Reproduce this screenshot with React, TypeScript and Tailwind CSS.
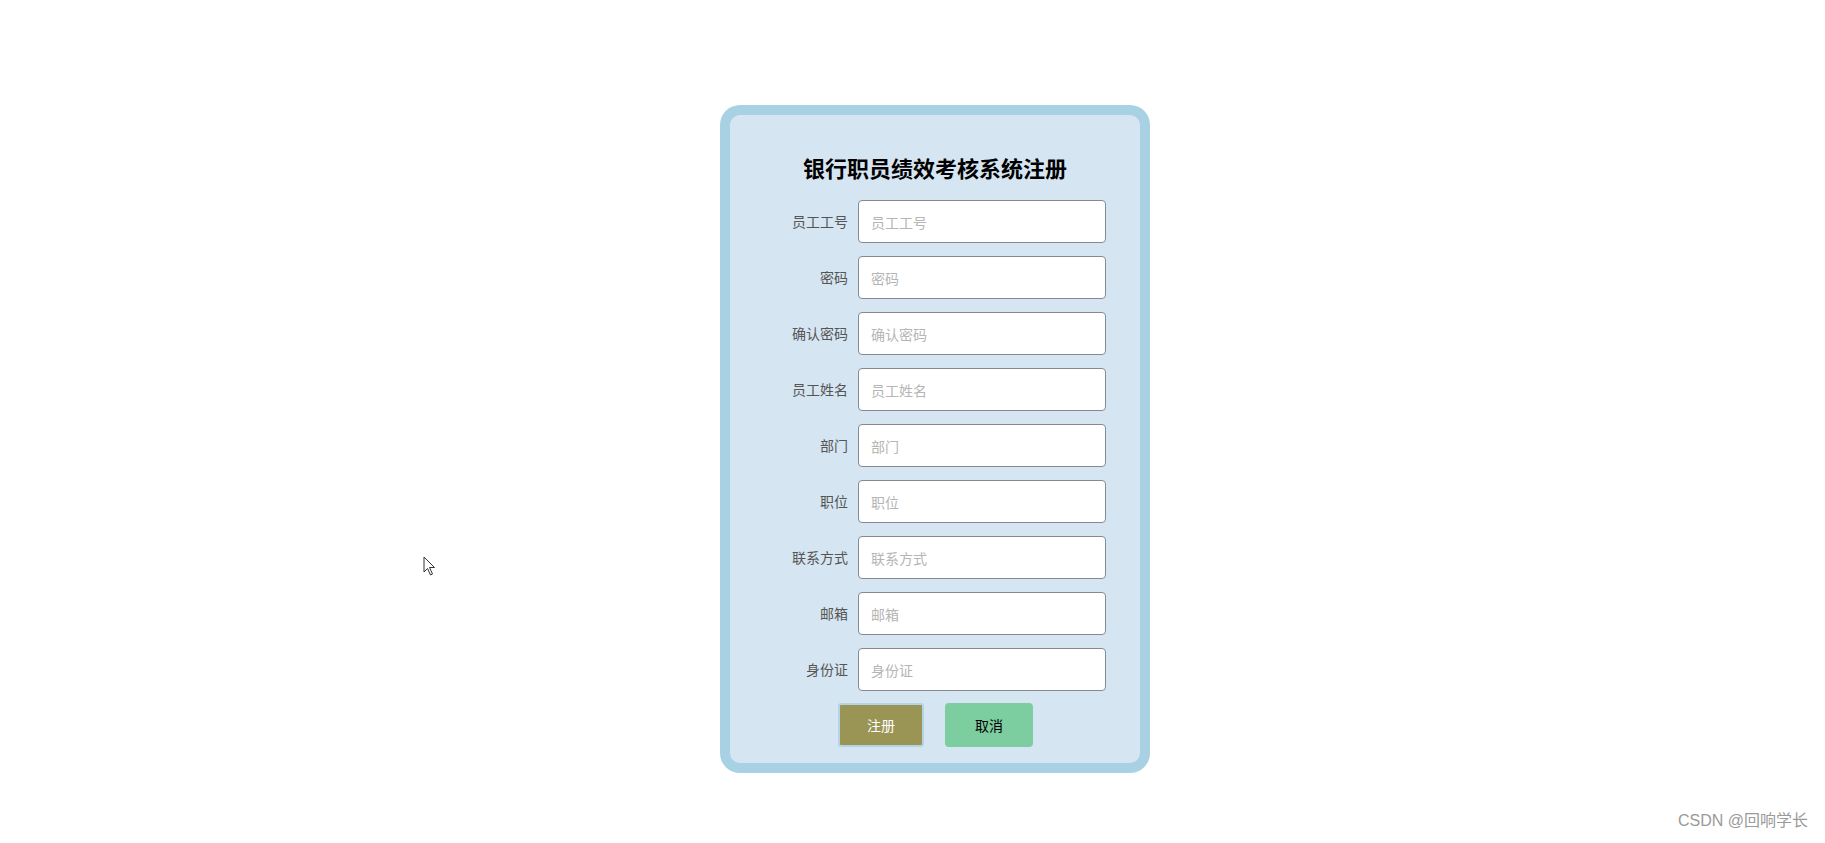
const fields = [
  "员工工号",
  "密码",
  "确认密码",
  "员工姓名",
  "部门",
  "职位",
  "联系方式",
  "邮箱",
  "身份证"
];

function Cursor() {
  return (
    <svg width="14" height="22" viewBox="0 0 14 22" className="absolute left-[423px] top-[556px]">
      <path
        d="M1 1 L1 16 L4.5 12.5 L7.5 19 L9.5 18 L6.5 11.5 L11.5 11.5 Z"
        fill="#fff"
        stroke="#333"
        strokeWidth="1"
        strokeLinejoin="round"
      />
    </svg>
  );
}

export default function App() {
  return (
    <div
      className="relative h-[843px] w-full overflow-hidden bg-white"
      style={{ fontFamily: '"Noto Sans CJK SC", "Noto Sans", sans-serif' }}
    >
      <div className="pl-[720px] pt-[105px]">
        <div className="w-[430px] rounded-[20px] bg-[#a8d2e4] p-[10px]">
          <div className="flex flex-col rounded-[10px] bg-[#d6e5f2] pb-[16px] pt-[36px]">
            <h1 className="mb-[17px] text-center text-[22px] font-bold leading-[32px] text-black">
              银行职员绩效考核系统注册
            </h1>
            <div className="flex flex-col gap-[13px]">
              {fields.map((f) => (
                <div key={f} className="flex items-center">
                  <label className="w-[128px] pr-[10px] text-right text-[14px] text-[#555]">{f}</label>
                  <input
                    placeholder={f}
                    className="h-[43px] w-[248px] rounded-[4px] border border-[#858a90] bg-white px-[12px] text-[14px] text-[#333] outline-none placeholder:text-[#b5b5b5]"
                  />
                </div>
              ))}
            </div>
            <div className="mt-[12px] flex gap-[21px] pl-[108px]">
              <button className="h-[44px] w-[86px] rounded-[3px] border-2 border-[#b3d4e4] bg-[#9a9555] text-[14px] text-white">
                注册
              </button>
              <button className="h-[44px] w-[88px] rounded-[4px] bg-[#7ccd9f] text-[14px] text-black">
                取消
              </button>
            </div>
          </div>
        </div>
      </div>
      <Cursor />
      <div
        className="absolute bottom-[10px] right-[17px] text-[16px] text-[#9a9a9a]"
        style={{ fontFamily: '"Liberation Sans", "Noto Sans CJK SC", sans-serif' }}
      >
        CSDN @回响学长
      </div>
    </div>
  );
}
